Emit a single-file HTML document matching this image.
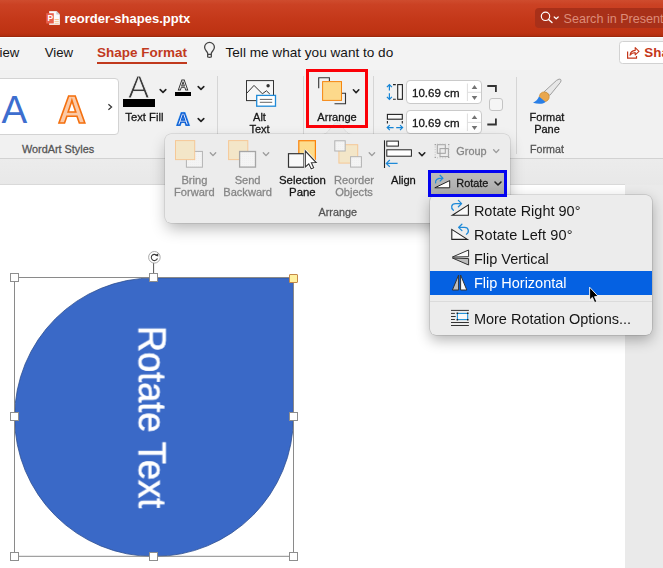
<!DOCTYPE html>
<html><head><meta charset="utf-8">
<style>
*{box-sizing:border-box;margin:0;padding:0}
html,body{width:663px;height:568px;overflow:hidden;background:#fff;font-family:"Liberation Sans",sans-serif;}
.abs{position:absolute}
#root{position:relative;width:663px;height:568px;overflow:hidden;background:#fff}
.t{position:absolute;white-space:nowrap;line-height:1;color:#151515}
.c{text-align:center;transform:translateX(-50%)}
#titlebar{left:0;top:0;width:663px;height:37px;background:linear-gradient(#cf4c2e,#cb4224 12%,#c5391a 50%,#bd3212 92%,#b02d0f);border-bottom:1px solid #9e280c}
#tabbar{left:0;top:37px;width:663px;height:33px;background:#f3f3f3;border-top:1px solid #fcfcfc}
#ribbon{left:0;top:70px;width:663px;height:89px;background:#f1f1f1;border-bottom:1px solid #d2d2d2}
#band{left:0;top:159px;width:663px;height:26px;background:linear-gradient(#ececec,#e8e8e8)}
#work{left:0;top:185px;width:663px;height:383px;background:#eaeaea}
#slide{left:0;top:185px;width:624.5px;height:383px;background:#fff}
.h{position:absolute;width:9px;height:9px;background:#fff;border:1px solid #8e8e8e}
.sep{position:absolute;width:1px;background:#d6d6d6}
svg{position:absolute;overflow:visible}
.dis{color:#868686}
.ck{fill:none;stroke:#222;stroke-width:1.6;stroke-linecap:round;stroke-linejoin:round}
.ckd{fill:none;stroke:#9c9c9c;stroke-width:1.35;stroke-linecap:round;stroke-linejoin:round}
</style></head><body>
<div id="root">
<div id="work" class="abs"></div>
<div id="slide" class="abs"></div>

<!-- shape -->
<svg id="shape" style="left:0;top:0" width="663" height="568">
  <path d="M154 277.9 L293.4 277.9 L293.4 417 A139.4 139.3 0 1 1 154 277.9 Z" fill="#3a69c7" stroke="#2f4f8f" stroke-width="0.8"/>
  <rect x="14.5" y="277.5" width="279" height="278.8" fill="none" stroke="#8a8a8a" stroke-width="1"/>
  <line x1="153.6" y1="263" x2="153.6" y2="274" stroke="#555" stroke-width="1"/>
  <circle cx="154.4" cy="257.3" r="5.8" fill="#fff" stroke="#a0a0a0" stroke-width="0.9"/>
  <path d="M156.9 255.6 A3.1 3.1 0 1 0 157.4 258.4" fill="none" stroke="#3a3a3a" stroke-width="1.05"/>
  <path d="M155 255.6 L158.2 256.6 L158.3 253.2 Z" fill="#3a3a3a"/>
</svg>
<div class="t" id="rot" style="left:151.6px;top:416.5px;color:#fff;font-size:39.3px;will-change:transform;-webkit-text-stroke:0.7px #fff;transform:translate(-50%,-50%) rotate(90deg) scale(0.92,1);">Rotate Text</div>
<div class="h" style="left:10px;top:273px"></div>
<div class="h" style="left:149px;top:273px"></div>
<div class="h" style="left:288.5px;top:273.8px;width:9.2px;height:9.1px;background:#fff0a0;border-color:#c48849;border-radius:1px"></div>
<div class="h" style="left:10px;top:412px"></div>
<div class="h" style="left:289px;top:412px"></div>
<div class="h" style="left:10px;top:552px"></div>
<div class="h" style="left:149px;top:552px"></div>
<div class="h" style="left:289px;top:552px"></div>

<div id="band" class="abs"></div>
<div class="abs" style="left:0;top:184px;width:624.5px;height:1px;background:#d9d9d9"></div>
<div id="titlebar" class="abs"></div>
<div id="tabbar" class="abs"></div>
<div id="ribbon" class="abs"></div>

<!-- TITLEBAR -->
<div class="t" style="left:64.5px;top:11.6px;font-size:13px;color:#fff;font-weight:bold" id="title">reorder-shapes.pptx</div>
<div class="abs" style="left:535px;top:8px;width:140px;height:20px;background:#a83019;border-radius:4px"></div>
<div class="t" style="left:563.5px;top:12.8px;font-size:12.6px;color:#dd8c78" id="search">Search in Presentation</div>


<svg style="left:0;top:0" width="663" height="36" id="ticons">
  <path d="M49 11 H56.6 L60 14.4 V25 H49 Z" fill="#fbfbfb" stroke="#b8452c" stroke-width="0.3"/>
  <path d="M56.4 11 V14.6 H60 Z" fill="#c9c9c9"/>
  <rect x="54.5" y="19" width="4.3" height="0.9" fill="#f5c08a"/><rect x="54.5" y="20.9" width="4.3" height="0.9" fill="#f5c08a"/><rect x="54.5" y="22.8" width="4.3" height="0.9" fill="#f5c08a"/>
  <rect x="46.2" y="13.2" width="7.6" height="10.3" fill="#e8604c"/>
  <text x="47.6" y="21.4" font-size="8.5" font-weight="bold" fill="#fff" font-family="Liberation Sans, sans-serif">P</text>
  <circle cx="545.5" cy="16.3" r="4.2" fill="none" stroke="#fff" stroke-width="1.15"/>
  <line x1="548.6" y1="19.4" x2="552" y2="22.6" stroke="#fff" stroke-width="1.4" stroke-linecap="round"/>
  <path d="M554.2 17 L556.2 18.8 L558.2 17" fill="none" stroke="#fff" stroke-width="1.2" stroke-linecap="round" stroke-linejoin="round"/>
</svg>
<!-- TABBAR -->
<div class="t" style="left:-0.5px;top:45.7px;font-size:13.2px" id="iew">iew</div>
<div class="t" style="left:44.7px;top:45.7px;font-size:13.2px" id="view">View</div>
<div class="t" style="left:97px;top:46px;font-size:13.5px;font-weight:bold;color:#c13a1e" id="sf">Shape Format</div>
<div class="abs" style="left:97px;top:61.8px;width:90.4px;height:2.6px;background:#c13a1e"></div>
<div class="t" style="left:225.5px;top:45.5px;font-size:13.6px" id="tell">Tell me what you want to do</div>
<div class="abs" style="left:618.5px;top:41.3px;width:60px;height:23.2px;background:#fff;border:1px solid #d2d2d2;border-radius:3.5px"></div>
<div class="t" style="left:644.3px;top:45.7px;font-size:13.4px;font-weight:bold;color:#c4371b" id="share">Share</div>


<svg style="left:0;top:36px" width="663" height="34" viewBox="0 36 663 34" id="tabicons">
  <path d="M207.7 57 V53.4 C207.7 51.6 204.6 50.4 204.6 47.3 A4.9 4.9 0 0 1 214.4 47.3 C214.4 50.4 211.3 51.6 211.3 53.4 V57 Q209.5 57.7 207.7 57 Z M207.7 54.3 H211.3" fill="none" stroke="#444" stroke-width="1.3" stroke-linejoin="round"/>
  <path d="M627.6 51.5 V58.2 H636.5 V56" fill="none" stroke="#c4371b" stroke-width="1.2"/>
  <path d="M630 55.2 C630.4 52.2 632.6 50.6 635.2 50.4 V47.6 L639 51.4 L635.2 54.8 V52.6 C633 52.6 631.4 53.4 630 55.2 Z" fill="none" stroke="#c4371b" stroke-width="1.1" stroke-linejoin="round"/>
</svg>
<!-- RIBBON -->
<div class="abs" style="left:-10px;top:78px;width:129px;height:57px;background:#fff;border:1px solid #d3d3d3;border-radius:4px"></div>
<div class="t" style="left:1.4px;top:91px;font-size:38.5px;color:#3d6ecf" id="blueA">A</div>
<div class="t" style="left:58.4px;top:90.7px;font-size:38.6px;color:#fbc9a6;font-weight:bold;will-change:transform;-webkit-text-stroke:1.6px #f4700f" id="orA">A</div>
<div class="t dis" style="left:22px;top:144px;font-size:10.85px;-webkit-text-stroke:0.28px;color:#555" id="was">WordArt Styles</div>
<div class="t" style="left:128.3px;top:71.3px;font-size:32px;color:#3a3a3a;will-change:transform;-webkit-text-stroke:0.8px #f1f1f1" id="bigA">A</div>
<div class="abs" style="left:122.8px;top:99.2px;width:32.2px;height:7.8px;background:#000"></div>
<div class="t" style="left:125.3px;top:111.5px;font-size:11.25px;-webkit-text-stroke:0.28px" id="tf">Text Fill</div>
<div class="t" style="left:178.1px;top:78.2px;font-size:14px;color:#fff;font-weight:bold;will-change:transform;-webkit-text-stroke:0.9px #2e2e2e" id="smA">A</div>
<div class="abs" style="left:175px;top:92.2px;width:16.2px;height:3.8px;background:#000"></div>
<div class="t" style="left:176.9px;top:111.8px;font-size:16.8px;color:#3f9ff2;font-weight:bold;will-change:transform;-webkit-text-stroke:2.2px #47a4f4" id="fxA">A</div>
<div class="t" style="left:176.9px;top:111.8px;font-size:16.8px;color:#eef5ff;font-weight:bold;will-change:transform;-webkit-text-stroke:1.25px #0f5ad0" id="fxA2">A</div>
<div class="sep" style="left:217px;top:76px;height:74px"></div>
<div class="t c" style="left:259.5px;top:111px;font-size:11px;-webkit-text-stroke:0.28px;line-height:12px">Alt<br>Text</div>
<div class="sep" style="left:303px;top:76px;height:58px"></div>
<div class="t" style="left:317.3px;top:112px;font-size:11.1px;-webkit-text-stroke:0.28px" id="arr">Arrange</div>
<div class="abs" style="left:306px;top:69px;width:62px;height:58.8px;border:3px solid #fb0007;z-index:5"></div>
<div class="sep" style="left:372.5px;top:76px;height:58px"></div>
<div class="abs" style="left:406.2px;top:80.3px;width:75.6px;height:23.7px;background:#fff;border:1px solid #cacaca;border-radius:4px"></div>
<div class="abs" style="left:406.2px;top:110.4px;width:75.6px;height:23.7px;background:#fff;border:1px solid #cacaca;border-radius:4px"></div>
<div class="abs" style="left:489px;top:98.1px;width:13.6px;height:13.4px;background:#f5f5f5;border:1px solid #c4c4c4;border-radius:3px"></div>
<div class="t" style="left:412px;top:88px;font-size:11.55px;-webkit-text-stroke:0.28px" id="cm1">10.69 cm</div>
<div class="t" style="left:412px;top:117.7px;font-size:11.55px;-webkit-text-stroke:0.28px" id="cm2">10.69 cm</div>
<div class="sep" style="left:516px;top:76.5px;height:77.5px"></div>
<div class="t c" style="left:547px;top:111px;font-size:11px;-webkit-text-stroke:0.28px;line-height:12px">Format<br>Pane</div>
<div class="t" style="left:530px;top:144px;font-size:10.7px;-webkit-text-stroke:0.28px;color:#555" id="fmt">Format</div>

<svg style="left:0;top:70px" width="663" height="90" viewBox="0 70 663 90" id="ribicons">
<path d="M108.4 104.2 L111.6 107 L108.4 109.8" fill="none" stroke="#333" stroke-width="1.2"/>

<!-- alt text -->
<rect x="246.5" y="80.6" width="27" height="20" fill="#f6f6f6" stroke="#333" stroke-width="1"/>
<path d="M246.8 93.2 L254 85.4 L262.4 93.8 L266.4 90.8 L269.8 94" fill="none" stroke="#333" stroke-width="1"/>
<circle cx="268.1" cy="85.8" r="1.7" fill="#333"/>
<rect x="256.7" y="95.4" width="18.8" height="10.8" fill="#fff" stroke="#1f8ad8" stroke-width="1.3"/>
<path d="M259.8 99.4 H272.2 M259.8 102.3 H272.2" stroke="#555" stroke-width="0.9"/>
<!-- arrange -->
<path d="M318.7 88.3 V77.8 H329.4 V81" fill="none" stroke="#333" stroke-width="1.1"/>
<path d="M334.5 103.8 H345.5 V93.3 H342" fill="none" stroke="#333" stroke-width="1.1"/>
<rect x="322.6" y="81.6" width="18.9" height="18.8" fill="#fdd98b" stroke="#f6860f" stroke-width="1"/>
<path d="M353.4 89.8 L356.1 92.7 L358.8 89.8" class="ck"/>
<!-- size icons -->
<path d="M389.4 85 V90.6 M389.4 93.2 V99 M386.9 87.2 L389.4 84.6 L391.9 87.2 M386.9 96.8 L389.4 99.4 L391.9 96.8" fill="none" stroke="#1585d6" stroke-width="1.2"/>
<rect x="397.7" y="84.6" width="4.7" height="14.7" fill="#f9f9f9" stroke="#222" stroke-width="1.1"/>
<path d="M393 84.6 H395.8 M393 99.3 H395.8" stroke="#222" stroke-width="1.1"/>
<rect x="387.4" y="114.4" width="14.9" height="4.8" fill="#f9f9f9" stroke="#222" stroke-width="1.1"/>
<path d="M387.4 120.9 V123.4 M402.3 120.9 V123.4" stroke="#222" stroke-width="1.1"/>
<path d="M387.4 127.6 H393.6 M396.2 127.6 H402.4 M389.8 125.1 L387.2 127.6 L389.8 130.1 M400 125.1 L402.6 127.6 L400 130.1" fill="none" stroke="#1585d6" stroke-width="1.2"/>
<path d="M467.4 83.5 V101 M467.4 113.5 V131 M467.4 92.3 H481 M467.4 122.4 H481" stroke="#dedede" stroke-width="1"/>
<path d="M471.7 89 L474.5 85.1 L477.3 89 Z M471.7 96 L474.5 99.9 L477.3 96 Z M471.7 119.1 L474.5 115.2 L477.3 119.1 Z M471.7 126.1 L474.5 130 L477.3 126.1 Z" fill="#737373"/>
<path d="M487.3 86 H495.9 V92" fill="none" stroke="#333" stroke-width="1.8"/>
<path d="M487.3 124.5 H495.9 V118.5" fill="none" stroke="#333" stroke-width="1.8"/>
<!-- brush -->
<path d="M544.2 91.7 L556.5 80.4 Q559.6 78.3 560.6 79.4 Q561.6 80.6 560.4 82.4 L549.9 95.3 Z" fill="#e7e7e7" stroke="#8c8c8c" stroke-width="0.8" stroke-linejoin="round"/>
<circle cx="544.3" cy="96.8" r="4.9" fill="#e9a74d" stroke="#c98a2e" stroke-width="0.7"/>
<path d="M539 96.6 L545.6 101.9 C543 104.2 538 104.4 533 102.7 C536 101.6 537.8 99.6 539 96.6 Z" fill="#2a7fe6"/>
<path d="M160.2 89.6 L163 92.4 L165.8 89.6" class="ck"/>
<path d="M198.2 86.6 L201 89.4 L203.8 86.6" class="ck"/>
<path d="M198.2 118.6 L201 121.4 L203.8 118.6" class="ck"/>
</svg>
<!-- POPUP -->
<svg style="left:0;top:110px" width="663" height="30" viewBox="0 110 663 30"><path d="M321 134.5 C328 134.5 329.5 128.5 333.5 124.5 Q337 121 340.5 124.5 C344.5 128.5 346 134.5 353 134.5 Z" fill="#ececec" stroke="rgba(0,0,0,0.12)" stroke-width="0.6"/></svg>
<div class="abs" id="popup" style="left:164.5px;top:133.5px;width:345px;height:89px;background:#ececec;border-radius:6px;box-shadow:0 0 0 0.5px rgba(0,0,0,0.16),0 7px 16px -2px rgba(0,0,0,0.3)"></div>
<div class="t c dis" style="left:194.4px;top:173.8px;font-size:11.1px;-webkit-text-stroke:0.28px;line-height:12px">Bring<br>Forward</div>
<div class="t c dis" style="left:247.6px;top:173.8px;font-size:11.1px;-webkit-text-stroke:0.28px;line-height:12px">Send<br>Backward</div>
<div class="t c" style="left:302.4px;top:173.8px;font-size:11.4px;-webkit-text-stroke:0.28px;line-height:12px">Selection<br>Pane</div>
<div class="t c dis" style="left:354px;top:173.8px;font-size:11.1px;-webkit-text-stroke:0.28px;line-height:12px">Reorder<br>Objects</div>
<div class="t c" style="left:403.4px;top:173.8px;font-size:11.2px;-webkit-text-stroke:0.28px;line-height:12px">Align</div>
<div class="t dis" style="left:456.3px;top:145.6px;font-size:10.9px;-webkit-text-stroke:0.28px" id="grp">Group</div>
<div class="abs" style="left:430px;top:172px;width:75.2px;height:23px;background:linear-gradient(#bcbcbc,#acacac)"></div>
<div class="abs" style="left:428px;top:170px;width:79.2px;height:26.8px;border:3px solid #0303f0;z-index:5"></div>
<div class="t" style="left:456.3px;top:177.5px;font-size:10.9px;-webkit-text-stroke:0.28px" id="rt">Rotate</div>
<div class="t" style="left:318.5px;top:207px;font-size:10.8px;-webkit-text-stroke:0.28px;color:#555" id="arr2">Arrange</div>


<svg style="left:0;top:130px" width="663" height="100" viewBox="0 130 663 100" id="popicons">
<defs><pattern id="dots" width="2" height="2" patternUnits="userSpaceOnUse"><rect width="2" height="2" fill="#f4f4f4"/><rect width="1" height="1" fill="#f0f0f0"/></pattern></defs>
<!-- bring forward -->
<rect x="186.4" y="151.4" width="16" height="15.8" fill="url(#dots)" stroke="#b2b2b2" stroke-width="1"/>
<rect x="175.5" y="140.6" width="19.2" height="19" fill="#f3e6c8" stroke="#f5c897" stroke-width="1"/>
<path d="M210.3 152.8 L213 155.6 L215.7 152.8" class="ckd"/>
<!-- send backward -->
<rect x="228.6" y="140.6" width="19.2" height="19" fill="#f3e6c8" stroke="#f5c897" stroke-width="1"/>
<rect x="239.6" y="151.5" width="15.9" height="15.6" fill="url(#dots)" stroke="#a6a6a6" stroke-width="1.3"/>
<path d="M263.3 152.8 L266 155.6 L268.7 152.8" class="ckd"/>
<!-- selection pane -->
<rect x="298.8" y="140.7" width="16.6" height="19.2" fill="#fddc8c" stroke="#fb8208" stroke-width="1.2"/>
<rect x="288.5" y="153.7" width="15.4" height="13.5" fill="#f9f9f9" stroke="#333" stroke-width="1.2"/>
<path id="cur" d="M305.3 151 V167 L308.8 163.8 L311.2 168.9 L313.7 167.8 L311.4 162.8 L316.2 162.6 Z" fill="#fff" stroke="#fff" stroke-width="2.8" stroke-linejoin="round"/>
<path d="M305.3 151 V167 L308.8 163.8 L311.2 168.9 L313.7 167.8 L311.4 162.8 L316.2 162.6 Z" fill="#fff" stroke="#333" stroke-width="1.1" stroke-linejoin="miter"/>
<!-- reorder -->
<rect x="338.9" y="144.7" width="18.8" height="18.4" fill="#f3e6c8" stroke="#f5c897" stroke-width="1"/>
<rect x="334.8" y="140.8" width="10.4" height="10.2" fill="url(#dots)" stroke="#b2b2b2" stroke-width="1"/>
<rect x="350.6" y="156.7" width="10.8" height="10.4" fill="url(#dots)" stroke="#b2b2b2" stroke-width="1"/>
<path d="M369.2 152.8 L371.9 155.6 L374.6 152.8" class="ckd"/>
<!-- align -->
<path d="M384.5 140.3 V168" stroke="#222" stroke-width="1.1"/>
<rect x="386.8" y="141.1" width="11.6" height="5" fill="#fff" stroke="#222" stroke-width="1"/>
<rect x="386.8" y="149.8" width="24.6" height="6.4" fill="#fff" stroke="#222" stroke-width="1"/>
<path d="M386.4 163.4 H397.6 M389.8 160 L386.3 163.4 L389.8 166.8" fill="none" stroke="#1f8ad8" stroke-width="1.2"/>
<path d="M419.2 152.8 L422 155.7 L424.8 152.8" class="ck"/>
<!-- group -->
<rect x="437.3" y="144.7" width="8" height="8.6" fill="none" stroke="#a2a2a2" stroke-width="1"/>
<rect x="440" y="148.6" width="8.4" height="8" fill="none" stroke="#a2a2a2" stroke-width="1"/>
<path d="M434.6 144.6 h1.4 M434.6 157.4 h1.4 M448 144.6 h1.4 M448 157.4 h1.4" stroke="#a2a2a2" stroke-width="1.4"/>
<path d="M435.2 146.5 V156 M448.9 146.5 V156 M437 144.2 H447 M437 157.8 H447" stroke="#b8b8b8" stroke-width="0.8" stroke-dasharray="1 1.6"/>
<path d="M493.6 149.8 L496.2 152.6 L498.8 149.8" class="ckd"/>
<!-- rotate -->
<path d="M434.8 187.8 H449.7 V180.6 Z" fill="#fff" stroke="#222" stroke-width="1"/>
<path d="M435.6 183.4 C435.2 180 436.6 178.2 442.6 178.2 M439.8 175 L442.9 178.2 L439.8 181.4" fill="none" stroke="#1f8ad8" stroke-width="1.2"/>
<path d="M495 182 L498 185 L501 182" class="ck"/>
</svg>
<!-- MENU -->
<div class="abs" id="menu" style="left:430px;top:195px;width:222px;height:139.5px;background:#ececec;border-radius:6px;box-shadow:0 0 0 0.5px rgba(0,0,0,0.2),0 5px 14px rgba(0,0,0,0.3)"></div>
<div class="abs" style="left:430px;top:271px;width:222px;height:23.7px;background:#0561e2"></div>
<div class="abs" style="left:430px;top:300.5px;width:222px;height:1.6px;background:#dbdbdb"></div>
<div class="t" style="left:473.9px;top:204px;font-size:14.5px" id="m1">Rotate Right 90°</div>
<div class="t" style="left:473.9px;top:228px;font-size:14.5px;letter-spacing:0.12px" id="m2">Rotate Left 90°</div>
<div class="t" style="left:473.9px;top:252px;font-size:14.5px" id="m3">Flip Vertical</div>
<div class="t" style="left:473.9px;top:276px;font-size:14.5px;color:#fff" id="m4">Flip Horizontal</div>
<div class="t" style="left:473.9px;top:312px;font-size:14.5px" id="m5">More Rotation Options...</div>

<svg style="left:0;top:190px" width="663" height="150" viewBox="0 190 663 150" id="menuicons">
<path d="M452.3 215.3 H468.4 V204.9 Z" fill="#fafafa" stroke="#222" stroke-width="1.1" stroke-linejoin="miter"/>
<path d="M453.4 210.2 C450.6 208 451 203.8 455.6 203.6 H461.2 M458.4 200.4 L461.6 203.6 L458.4 206.8" fill="none" stroke="#1f8ad8" stroke-width="1.3" stroke-linecap="round" stroke-linejoin="round"/>
<path d="M451.8 229.4 V239.4 H467.4 Z" fill="#fafafa" stroke="#222" stroke-width="1.1"/>
<path d="M466.4 234.2 C469.4 232.4 469 227.5 464.6 227.4 H459 M461.9 224.2 L458.6 227.4 L461.9 230.6" fill="none" stroke="#1f8ad8" stroke-width="1.3" stroke-linecap="round" stroke-linejoin="round"/>
<path d="M452.4 257 L468.6 250 V256.7 Z" fill="#fafafa" stroke="#333" stroke-width="1"/>
<path d="M452.4 258 L468.6 258.6 V265 Z" fill="#bdbdbd" stroke="#333" stroke-width="1"/>
<path d="M458.6 275 V290 H452.4 Z" fill="#bdbdbd" stroke="#333" stroke-width="1"/>
<path d="M460.6 275 V290 H466.8 Z" fill="#fafafa" stroke="#333" stroke-width="1"/>
<path d="M451 310.4 H468.9 M451 322.5 H468.9 M451 325.5 H468.9 M451 313.4 H454.9 M451 316.5 H455.7 M451 319.5 H454.9" stroke="#333" stroke-width="1"/>
<rect x="457.4" y="313.4" width="10.3" height="6.2" fill="#f8f8f8" stroke="#0e8ad8" stroke-width="1"/>
<path d="M456.6 312.6 h1.5 v1.5 h-1.5 Z M467 312.6 h1.5 v1.5 h-1.5 Z M456.6 318.9 h1.5 v1.5 h-1.5 Z M467 318.9 h1.5 v1.5 h-1.5 Z" fill="#222"/>
<!-- cursor -->
<path d="M589.6 287.2 V300 L592.4 297.4 L594.6 302.6 L596.8 301.7 L594.6 296.7 L598.3 296.5 Z" fill="#000" stroke="#fff" stroke-width="0.9" stroke-linejoin="round"/>
</svg>

</div>
</body></html>
